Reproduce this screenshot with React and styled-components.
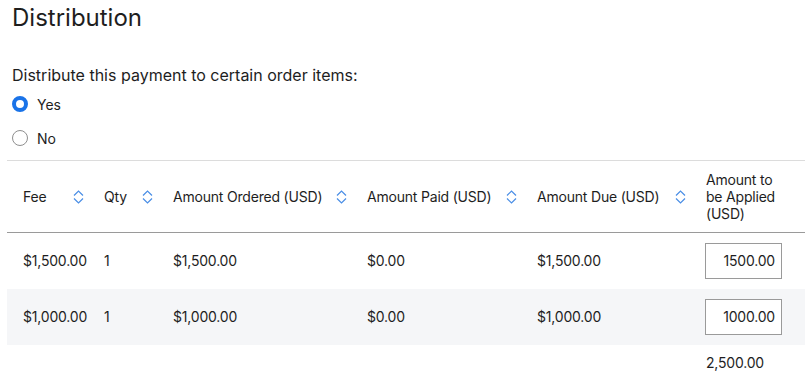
import React from 'react';
import styled, { createGlobalStyle } from 'styled-components';

const GlobalStyle = createGlobalStyle`
  body {
    margin: 0;
    font-family: Inter, Roboto, "Liberation Sans", sans-serif;
    color: #1e1e1e;
    background: #fff;
    overflow: hidden;
  }
`;

const Page = styled.div`
  padding-left: 7px;
`;

const Intro = styled.div`
  padding-left: 5px;
  padding-bottom: 5px;
`;

const Title = styled.h2`
  margin: 0;
  font-size: 24px;
  font-weight: 400;
  line-height: 36px;
`;

const Prompt = styled.p`
  margin: 27px 0 0;
  font-size: 16px;
  line-height: 24px;
`;

const RadioRow = styled.label`
  display: flex;
  align-items: center;
  gap: 9px;
  height: 34px;
  font-size: 14px;
`;

const RadioDot = styled.span`
  width: 16px;
  height: 16px;
  box-sizing: border-box;
  border-radius: 50%;
  background: #fff;
  border: ${p => (p.checked ? '4px solid #1a73e8' : '1px solid #8f8f8f')};
`;

const Table = styled.table`
  width: 798px;
  table-layout: fixed;
  border-collapse: collapse;
  font-size: 14px;
  letter-spacing: -0.2px;
  border-top: 1px solid #dcdcdc;
`;

const HeadRow = styled.tr`
  height: 72px;
  border-bottom: 1px solid #9a9a9a;
`;

const Th = styled.th`
  box-sizing: border-box;
  width: ${p => (p.w ? `${p.w}px` : 'auto')};
  padding: 0 4px 0 16px;
  font-weight: 400;
  text-align: left;
  vertical-align: middle;
`;

const HeadInner = styled.div`
  display: flex;
  align-items: center;
  justify-content: space-between;
  white-space: nowrap;
`;

const WrapLabel = styled.span`
  display: block;
  max-width: 75px;
  line-height: 17px;
`;

const Row = styled.tr`
  height: 56px;
  background: ${p => (p.shaded ? '#f5f6f8' : '#fff')};
`;

const Td = styled.td`
  padding: 0 16px;
  vertical-align: middle;
  white-space: nowrap;
`;

const AmountInput = styled.input`
  width: 77px;
  height: 36px;
  box-sizing: border-box;
  border: 1px solid #9a9a9a;
  padding: 0 6px;
  margin-left: -1px;
  font: inherit;
  letter-spacing: inherit;
  color: #1e1e1e;
  text-align: right;
  background: #fff;
`;

const TotalRow = styled.tr`
  height: 36px;
`;

const SortIcon = () => (
  <svg width="11" height="16" viewBox="0 0 11 16" fill="none">
    <path d="M1 6.5 L5.5 2 L10 6.5" stroke="#4a8ee6" strokeWidth="1.2" />
    <path d="M1 9.5 L5.5 14 L10 9.5" stroke="#4a8ee6" strokeWidth="1.2" />
  </svg>
);

const columns = [
  { label: 'Fee', w: 81 },
  { label: 'Qty', w: 69 },
  { label: 'Amount Ordered (USD)', w: 194 },
  { label: 'Amount Paid (USD)', w: 170 },
  { label: 'Amount Due (USD)', w: 169 },
];

const rows = [
  { fee: '$1,500.00', qty: 1, ordered: '$1,500.00', paid: '$0.00', due: '$1,500.00', apply: '1500.00' },
  { fee: '$1,000.00', qty: 1, ordered: '$1,000.00', paid: '$0.00', due: '$1,000.00', apply: '1000.00' },
];

export default function App() {
  return (
    <Page>
      <GlobalStyle />
      <Intro>
        <Title>Distribution</Title>
        <Prompt>Distribute this payment to certain order items:</Prompt>
        <RadioRow>
          <RadioDot checked />
          Yes
        </RadioRow>
        <RadioRow>
          <RadioDot />
          No
        </RadioRow>
      </Intro>
      <Table>
        <thead>
          <HeadRow>
            {columns.map(c => (
              <Th key={c.label} w={c.w}>
                <HeadInner>
                  <span>{c.label}</span>
                  <SortIcon />
                </HeadInner>
              </Th>
            ))}
            <Th>
              <WrapLabel>Amount to be Applied (USD)</WrapLabel>
            </Th>
          </HeadRow>
        </thead>
        <tbody>
          {rows.map((r, i) => (
            <Row key={r.fee} shaded={i % 2 === 1}>
              <Td>{r.fee}</Td>
              <Td>{r.qty}</Td>
              <Td>{r.ordered}</Td>
              <Td>{r.paid}</Td>
              <Td>{r.due}</Td>
              <Td>
                <AmountInput defaultValue={r.apply} />
              </Td>
            </Row>
          ))}
          <TotalRow>
            <Td />
            <Td />
            <Td />
            <Td />
            <Td />
            <Td>2,500.00</Td>
          </TotalRow>
        </tbody>
      </Table>
    </Page>
  );
}
